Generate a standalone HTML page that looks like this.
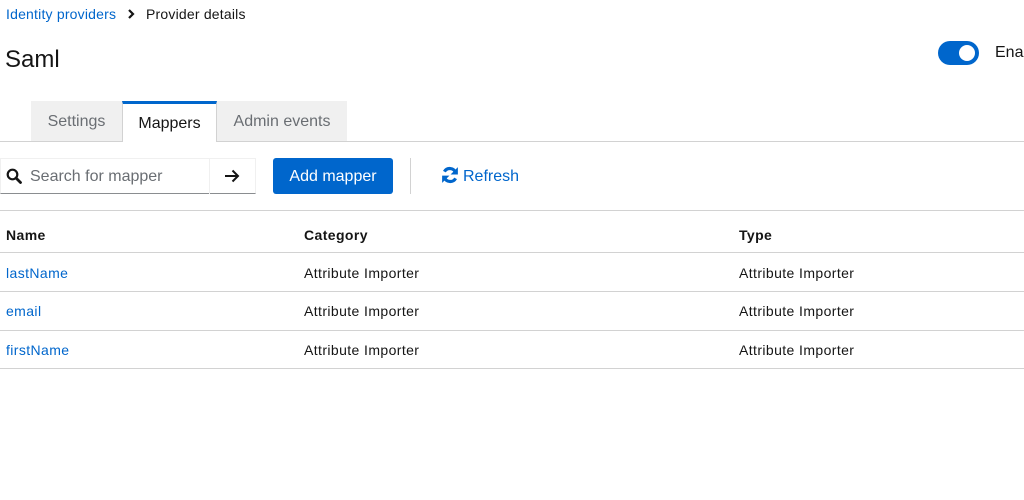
<!DOCTYPE html>
<html><head><style>
*{box-sizing:border-box;margin:0;padding:0}
body{width:1024px;height:500px;overflow:hidden;background:#fff;font-family:"Liberation Sans",sans-serif;color:#151515;position:relative;font-size:14px}
.a{position:absolute;white-space:nowrap}
.t{letter-spacing:0.4px}
.link{color:#06c}
.line{position:absolute;left:0;right:0;height:1px;background:#d2d2d2}
.tab{position:absolute;top:101px;height:40px;background:#f0f0f0;color:#6a6e73;font-size:16px;line-height:42px;text-align:center}
</style></head><body>
<div class="a link" style="left:6px;top:6px;font-size:14px;letter-spacing:0.2px">Identity providers</div>
<svg class="a" style="left:127px;top:9px" width="8" height="10" viewBox="0 0 8 10"><path d="M2 1L6 5L2 9" fill="none" stroke="#151515" stroke-width="2.2"/></svg>
<div class="a" style="left:146px;top:6px;font-size:14px;letter-spacing:0.2px">Provider details</div>
<div class="a" style="left:5px;top:46px;font-size:24px">Saml</div>
<div class="a" style="left:938px;top:41px;width:41px;height:24px;border-radius:12px;background:#06c"><div style="position:absolute;right:4px;top:4px;width:16px;height:16px;border-radius:50%;background:#fff"></div></div>
<div class="a" style="left:995px;top:44px;font-size:16px">Enabled</div>
<div class="line" style="top:141px"></div>
<div class="tab" style="left:31px;width:91px">Settings</div>
<div class="tab" style="left:122px;width:95px;background:#fff;color:#151515;border-top:3px solid #06c;border-left:1px solid #d2d2d2;border-right:1px solid #d2d2d2;height:41px;line-height:39px">Mappers</div>
<div class="tab" style="left:217px;width:130px">Admin events</div>
<div class="a" style="left:0;top:158px;width:256px;height:36px;border:1px solid #f0f0f0;border-bottom:1px solid #8a8d90"></div>
<div class="a" style="left:209px;top:158px;width:1px;height:36px;background:#f0f0f0"></div>
<svg class="a" style="left:6px;top:168px" width="16" height="16" viewBox="0 0 16 16"><circle cx="6.5" cy="6.5" r="4.8" fill="none" stroke="#151515" stroke-width="2.2"/><path d="M10 10L14.5 14.5" stroke="#151515" stroke-width="2.8" stroke-linecap="round"/></svg>
<div class="a" style="left:30px;top:168px;font-size:16px;color:#6a6e73">Search for mapper</div>
<svg class="a" style="left:224px;top:168px" width="16" height="16" viewBox="0 0 16 16"><path d="M1 8H14M8.5 2.5L14 8L8.5 13.5" fill="none" stroke="#151515" stroke-width="2"/></svg>
<div class="a" style="left:273px;top:158px;width:120px;height:36px;background:#06c;border-radius:3px;color:#fff;font-size:16px;line-height:37px;text-align:center">Add mapper</div>
<div class="a" style="left:410px;top:158px;width:1px;height:36px;background:#d2d2d2"></div>
<svg class="a" style="left:441px;top:166px" width="18" height="18" viewBox="0 0 16 16"><path d="M13 6A5.5 5.5 0 0 0 3 5M3 10A5.5 5.5 0 0 0 13 11" fill="none" stroke="#06c" stroke-width="2.8"/><path d="M15 1V7.5H8.5Z M1 15V8.5H7.5Z" fill="#06c"/></svg>
<div class="a link" style="left:463px;top:168px;font-size:16px">Refresh</div>
<div class="line" style="top:210px"></div>
<div class="a t" style="left:6px;top:227px;font-weight:bold">Name</div>
<div class="a t" style="left:304px;top:227px;font-weight:bold">Category</div>
<div class="a t" style="left:739px;top:227px;font-weight:bold">Type</div>
<div class="line" style="top:252px"></div>
<div class="a link t" style="left:6px;top:265px">lastName</div>
<div class="a t" style="left:304px;top:265px">Attribute Importer</div>
<div class="a t" style="left:739px;top:265px">Attribute Importer</div>
<div class="line" style="top:291px"></div>
<div class="a link t" style="left:6px;top:303px">email</div>
<div class="a t" style="left:304px;top:303px">Attribute Importer</div>
<div class="a t" style="left:739px;top:303px">Attribute Importer</div>
<div class="line" style="top:330px"></div>
<div class="a link t" style="left:6px;top:342px">firstName</div>
<div class="a t" style="left:304px;top:342px">Attribute Importer</div>
<div class="a t" style="left:739px;top:342px">Attribute Importer</div>
<div class="line" style="top:368px"></div>
</body></html>
